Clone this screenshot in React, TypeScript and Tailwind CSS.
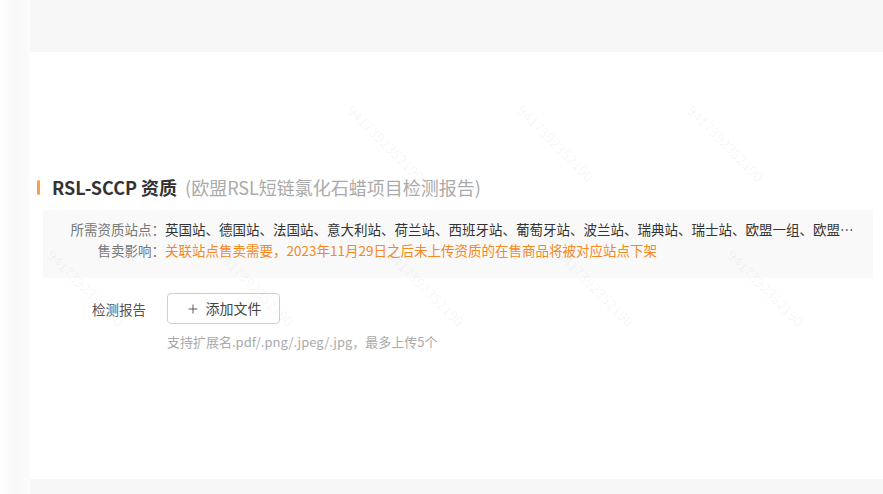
import { Plus } from "lucide-react";

const sites = [
  "英国站", "德国站", "法国站", "意大利站", "荷兰站", "西班牙站", "葡萄牙站",
  "波兰站", "瑞典站", "瑞士站", "欧盟一组", "欧盟二组", "欧盟三组",
];

// faint watermark tiles laid over the card
const marks = [
  { x: 320, y: 45 }, { x: 490, y: 45 }, { x: 660, y: 45 },
  { x: 20, y: 190 }, { x: 190, y: 190 }, { x: 360, y: 190 }, { x: 530, y: 190 }, { x: 700, y: 190 }, { x: 860, y: 190 },
];

export default function App() {
  return (
    <div
      className="w-[883px] h-[494px] flex bg-white overflow-hidden"
      style={{ fontFamily: '"Microsoft YaHei", "Noto Sans CJK SC", "Noto Sans", sans-serif' }}
    >
      {/* 左侧阴影条 */}
      <div className="w-[30px] shrink-0 h-full bg-gradient-to-r from-white via-[#f7f7f7] to-[#fcfcfc]" />

      <div className="flex-1 min-w-0 flex flex-col">
        <div className="h-[52px] bg-[#f7f7f7]" />

        <div className="relative flex-1 bg-white pl-[7px] pr-[10px] pt-[123px] overflow-hidden">
          {marks.map(({ x, y }, i) => (
            <span
              key={i}
              className="absolute text-[14px] text-[#000]/[0.05] rotate-45 origin-left whitespace-nowrap pointer-events-none select-none"
              style={{ left: x, top: y }}
            >
              9417392352190
            </span>
          ))}

          {/* 标题 */}
          <div className="flex items-center h-[25px]">
            <div className="w-[3px] h-[15px] bg-[#f5a04a] rounded-sm" />
            <span className="ml-[12px] text-[18px] font-bold text-[#333]">RSL-SCCP 资质</span>
            <span className="ml-[8px] text-[18px] text-[#aaa]">(欧盟RSL短链氯化石蜡项目检测报告)</span>
          </div>

          {/* 资质信息 */}
          <div className="mt-[10px] ml-[6px] bg-[#f9f9f9] pt-[11px] pb-[19px] pr-[12px] flex flex-col gap-[4px] text-[13.5px] leading-[17px]">
            <div className="flex">
              <span className="w-[122px] shrink-0 text-right text-[#777]">所需资质站点：</span>
              <span className="flex-1 min-w-0 truncate text-[#333]">{sites.join("、")}</span>
            </div>
            <div className="flex">
              <span className="w-[122px] shrink-0 text-right text-[#777]">售卖影响：</span>
              <span className="text-[#f5881f]">关联站点售卖需要，2023年11月29日之后未上传资质的在售商品将被对应站点下架</span>
            </div>
          </div>

          {/* 检测报告 */}
          <div className="mt-[15px] ml-[6px] flex">
            <div className="w-[124px] shrink-0 pr-[21px] pt-[6px] text-right text-[13.5px] text-[#555]">检测报告</div>
            <div className="flex flex-col">
              <button className="flex items-center gap-[6px] h-[31px] w-[113px] justify-center border border-[#cfcfcf] rounded-[4px] text-[14px] text-[#444] bg-white">
                <Plus size={14} strokeWidth={1.5} />
                添加文件
              </button>
              <div className="mt-[8px] text-[13px] text-[#aaa]">支持扩展名.pdf/.png/.jpeg/.jpg，最多上传5个</div>
            </div>
          </div>
        </div>

        <div className="h-[15px] bg-[#f7f7f7]" />
      </div>
    </div>
  );
}
